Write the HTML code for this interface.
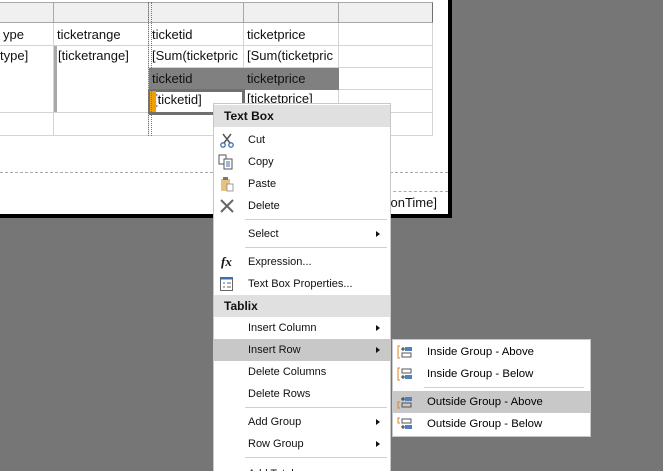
<!DOCTYPE html>
<html><head><meta charset="utf-8"><style>
*{margin:0;padding:0;box-sizing:border-box}
html,body{width:663px;height:471px;overflow:hidden}
body{background:#767676;position:relative;font-family:"Liberation Sans",sans-serif}
.a{position:absolute}
.canvas{left:0;top:0;background:#fff;border-right:4px solid #000;border-bottom:4px solid #000;width:452px;height:218px}
.c{position:absolute;border-right:1px solid #d4d4d4;border-bottom:1px solid #d4d4d4;font-size:13px;color:#111;padding:4px 0 0 3px;white-space:nowrap;overflow:hidden;line-height:15px}
.hd{background:#f0f0f0;border-color:#a8a8a8}
.menu{left:213px;top:103px;width:178px;height:370px;background:#fff;border:1px solid #c8c8c8;font-size:11px;color:#111}
.it{position:absolute;left:0;width:176px;height:22px;line-height:22px;padding-left:34px}
.sec{position:absolute;left:0;width:176px;height:22px;line-height:22px;background:#e0e0e0;font-weight:bold;font-size:12px;padding-left:10px}
.sep{position:absolute;left:31px;width:142px;height:1px;background:#d0d0d0}
.arr{position:absolute;right:10px;top:8px;width:0;height:0;border-left:4px solid #111;border-top:3px solid transparent;border-bottom:3px solid transparent}
.sub{left:392px;top:339px;width:199px;height:98px;background:#fff;border:1px solid #c8c8c8;font-size:11.4px}
.sit{position:absolute;left:0;width:197px;height:22px;line-height:22px;padding-left:34px}
</style></head><body>
<div class="a canvas"></div>
<div class="c hd" style="left:0;top:2px;width:54px;height:21px;border-top:1px solid #a8a8a8"></div>
<div class="c hd" style="left:54px;top:2px;width:95px;height:21px;border-top:1px solid #a8a8a8"></div>
<div class="c hd" style="left:149px;top:2px;width:95px;height:21px;border-top:1px solid #a8a8a8"></div>
<div class="c hd" style="left:244px;top:2px;width:95px;height:21px;border-top:1px solid #a8a8a8"></div>
<div class="c hd" style="left:339px;top:2px;width:94px;height:21px;border-top:1px solid #a8a8a8;border-right:1px solid #707070"></div>
<div class="c" style="left:0;top:23px;width:54px;height:23px">ype</div>
<div class="c" style="left:54px;top:23px;width:95px;height:23px">ticketrange</div>
<div class="c" style="left:149px;top:23px;width:95px;height:23px">ticketid</div>
<div class="c" style="left:244px;top:23px;width:95px;height:23px">ticketprice</div>
<div class="c" style="left:339px;top:23px;width:94px;height:23px"></div>
<div class="c" style="left:0;top:46px;width:54px;height:67px;padding-top:2px;padding-left:0">type]</div>
<div class="c" style="left:54px;top:46px;width:95px;height:67px;padding-top:2px;padding-left:4px">[ticketrange]</div>
<div class="a" style="left:54px;top:46px;width:3px;height:66px;background:#a8a8a8"></div>
<div class="c" style="left:149px;top:46px;width:95px;height:22px;padding-top:2px">[Sum(ticketpric</div>
<div class="c" style="left:244px;top:46px;width:95px;height:22px;padding-top:2px">[Sum(ticketpric</div>
<div class="c" style="left:339px;top:46px;width:94px;height:22px"></div>
<div class="c" style="left:149px;top:68px;width:95px;height:22px;background:#808080;border-color:#808080;padding-top:3px">ticketid</div>
<div class="c" style="left:244px;top:68px;width:95px;height:22px;background:#808080;border-color:#808080;padding-top:3px">ticketprice</div>
<div class="c" style="left:339px;top:68px;width:94px;height:22px"></div>
<div class="c" style="left:148px;top:89px;width:97px;height:26px;border:3px solid #707070;padding:0 0 0 3px">[ticketid]</div>
<div class="a" style="left:150px;top:91px;width:6px;height:21px;background:#f0a000"></div>
<div class="c" style="left:244px;top:90px;width:95px;height:23px;padding-top:1px">[ticketprice]</div>
<div class="c" style="left:339px;top:90px;width:94px;height:23px"></div>
<div class="c" style="left:0;top:113px;width:54px;height:23px"></div>
<div class="c" style="left:54px;top:113px;width:95px;height:23px"></div>
<div class="c" style="left:149px;top:113px;width:95px;height:23px"></div>
<div class="c" style="left:244px;top:113px;width:95px;height:23px"></div>
<div class="c" style="left:339px;top:113px;width:94px;height:23px"></div>
<div class="a" style="left:148px;top:2px;height:134px;border-left:1px dotted #777"></div>
<div class="a" style="left:151px;top:2px;height:134px;border-left:1px dotted #777"></div>
<div class="a" style="left:0;top:172px;width:448px;border-top:1px dashed #aaa"></div>
<div class="a" style="left:388px;top:191px;width:60px;border-top:1px dashed #aaa"></div>
<div class="a" style="left:384px;top:195px;font-size:13px;color:#111">tionTime]</div>
<div class="a menu">
<div class="sec" style="top:1px">Text Box</div>
<div class="it" style="top:25px"><svg class="a" style="left:5px;top:3px" width="16" height="16"><path d="M4 2L11 11M12 2L5 11" stroke="#555" stroke-width="1.5"/><circle cx="4" cy="13" r="2.2" fill="none" stroke="#3a6fb0" stroke-width="1.3"/><circle cx="12" cy="13" r="2.2" fill="none" stroke="#3a6fb0" stroke-width="1.3"/></svg>Cut</div>
<div class="it" style="top:47px"><svg class="a" style="left:4px;top:3px" width="16" height="16"><rect x="1" y="1" width="7" height="9" fill="#fff" stroke="#555"/><rect x="6" y="5" width="8" height="10" fill="#fff" stroke="#555"/><path d="M8 8h4M8 10h4M8 12h4" stroke="#3a6fb0"/></svg>Copy</div>
<div class="it" style="top:69px"><svg class="a" style="left:6px;top:3px" width="16" height="16"><rect x="1" y="3" width="9" height="12" fill="#e8c080"/><rect x="3" y="1" width="5" height="3" fill="#777"/><rect x="7" y="8" width="6" height="7" fill="#fff" stroke="#888" stroke-width=".8"/></svg>Paste</div>
<div class="it" style="top:91px"><svg class="a" style="left:5px;top:3px" width="16" height="16"><path d="M2 2L14 14M14 2L2 14" stroke="#666" stroke-width="2"/></svg>Delete</div>
<div class="sep" style="top:115px"></div>
<div class="it" style="top:119px">Select<span class="arr"></span></div>
<div class="sep" style="top:143px"></div>
<div class="it" style="top:147px"><span class="a" style="left:7px;top:0;font-family:'Liberation Serif',serif;font-style:italic;font-weight:bold;font-size:13px">fx</span>Expression...</div>
<div class="it" style="top:169px"><svg class="a" style="left:5px;top:3px" width="16" height="16"><rect x="1.5" y="1.5" width="12" height="13" fill="#fff" stroke="#666"/><rect x="1.5" y="1.5" width="12" height="2" fill="#3a6fb0"/><path d="M4 7h2M8 7h4M4 11h2M8 11h4" stroke="#666"/></svg>Text Box Properties...</div>
<div class="sec" style="top:191px">Tablix</div>
<div class="it" style="top:213px">Insert Column<span class="arr"></span></div>
<div class="it" style="top:235px;background:#c8c8c8">Insert Row<span class="arr"></span></div>
<div class="it" style="top:257px">Delete Columns</div>
<div class="it" style="top:279px">Delete Rows</div>
<div class="sep" style="top:303px"></div>
<div class="it" style="top:307px">Add Group<span class="arr"></span></div>
<div class="it" style="top:329px">Row Group<span class="arr"></span></div>
<div class="sep" style="top:353px"></div>
<div class="it" style="top:359px">Add Total</div>
</div>
<div class="a sub">
<div class="sit" style="top:1px"><svg class="a" style="left:4px;top:4px" width="16" height="14"><path d="M3 1H1V13H3" stroke="#e08020" fill="none"/><rect x="8" y="2" width="7" height="4" fill="#5080c0"/><rect x="5" y="8" width="9" height="4" fill="none" stroke="#555"/><path d="M4 4h4M6 2v4" stroke="#333"/></svg>Inside Group - Above</div>
<div class="sit" style="top:23px"><svg class="a" style="left:4px;top:4px" width="16" height="14"><path d="M3 1H1V13H3" stroke="#e08020" fill="none"/><rect x="5" y="2" width="9" height="4" fill="none" stroke="#555"/><rect x="8" y="8" width="7" height="4" fill="#5080c0"/><path d="M4 10h4M6 8v4" stroke="#333"/></svg>Inside Group - Below</div>
<div class="sep" style="top:47px;width:160px"></div>
<div class="sit" style="top:51px;background:#c8c8c8"><svg class="a" style="left:4px;top:4px" width="16" height="14"><path d="M3 7H1V13H3" stroke="#e08020" fill="none"/><rect x="8" y="2" width="7" height="4" fill="#5080c0"/><rect x="5" y="8" width="9" height="4" fill="none" stroke="#555"/><path d="M4 4h4M6 2v4" stroke="#333"/></svg>Outside Group - Above</div>
<div class="sit" style="top:73px"><svg class="a" style="left:4px;top:4px" width="16" height="14"><path d="M3 1H1V6H3" stroke="#e08020" fill="none"/><rect x="5" y="2" width="9" height="4" fill="none" stroke="#555"/><rect x="8" y="8" width="7" height="4" fill="#5080c0"/><path d="M4 10h4M6 8v4" stroke="#333"/></svg>Outside Group - Below</div>
</div>
</body></html>
